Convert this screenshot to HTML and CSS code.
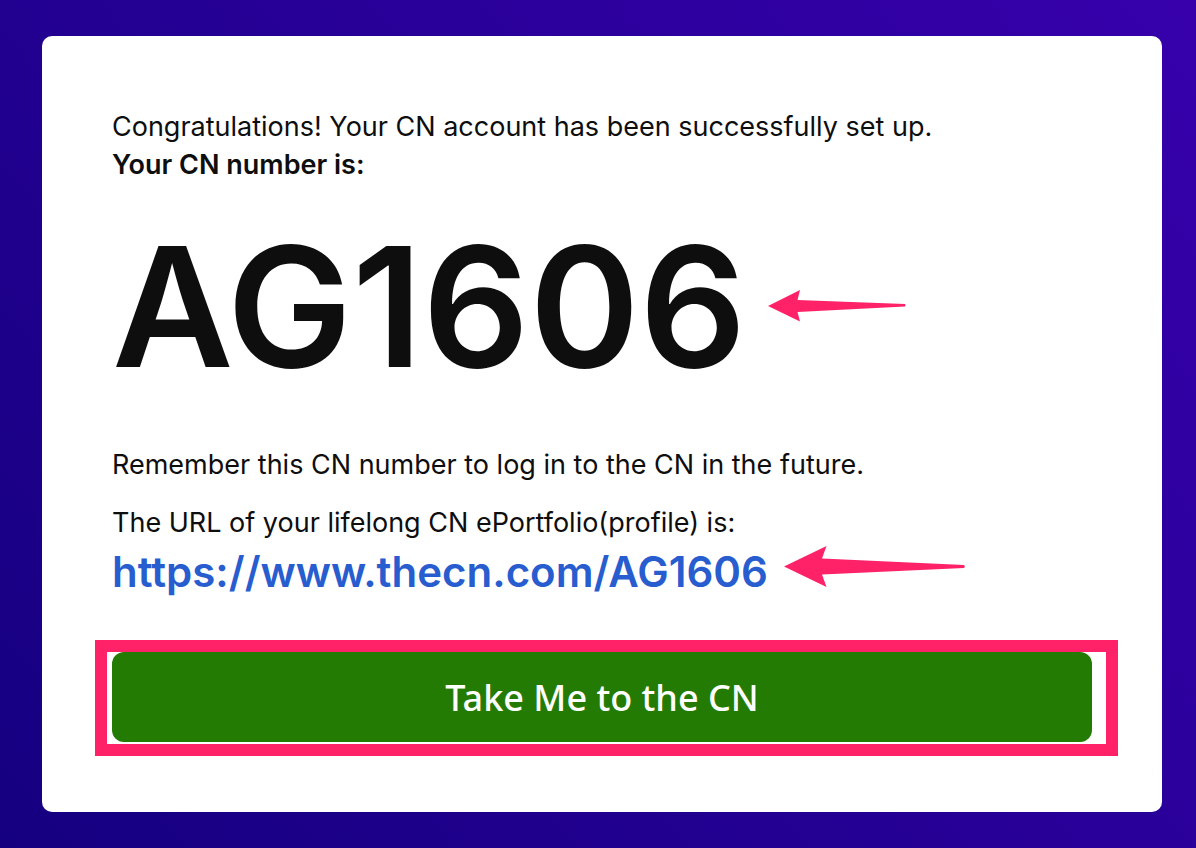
FILE: index.html
```html
<!DOCTYPE html>
<html lang="en">
<head>
    <meta charset="UTF-8">
    <meta name="viewport" content="width=device-width, initial-scale=1.0">
    <title>Your CN number</title>
    <link rel="stylesheet" href="styles.css">
</head>
<body>
    <main class="card">
        <p>Congratulations! Your CN account has been successfully set up.</p>
        <p><strong>Your CN number is:</strong></p>

        <div class="number-row">
            <h1>AG1606</h1>
            <svg class="arrow" width="138" height="32" viewBox="0 0 138 32" aria-hidden="true">
                <path d="M0 16 L32 0 L29.5 10 L137 14 Q138 15 137 16.5 L29.5 22 L32 31.5 Z"/>
            </svg>
        </div>

        <p>Remember this CN number to log in to the CN in the future.</p>

        <div class="profile">
            <p>The URL of your lifelong CN ePortfolio(profile) is:</p>
            <div class="link-row">
                <a href="#">https://www.thecn.com/AG1606</a>
                <svg class="arrow" width="181" height="52" viewBox="0 0 181 52" aria-hidden="true">
                    <path d="M0 20.5 L42.5 0 L38 12.5 L180 19 Q181.5 20.5 180 22 L38 28.5 L42.5 41 Z"/>
                </svg>
            </div>
        </div>

        <div class="action">
            <button type="button">Take Me to the CN</button>
            <span class="highlight"></span>
        </div>
    </main>
</body>
</html>
```

FILE: styles.css
```css
body {
    margin: 0;
    padding: 36px 34px 36px 42px;
    min-height: 100vh;
    box-sizing: border-box;
    background: linear-gradient(50deg, #150080, #3700ab);
    font-family: Inter, "Liberation Sans", sans-serif;
    font-size: 27px;
    line-height: 38px;
    color: #0e0e0e;
}

.card {
    background-color: #fff;
    border-radius: 10px;
    padding: 72px 70px 70px;
}

p {
    margin: 0;
}

strong {
    font-weight: 600;
}

.number-row {
    display: flex;
    align-items: center;
    gap: 22px;
    margin: 12px 0 30px;
}

h1 {
    margin: 0;
    font-size: 167px;
    font-weight: 600;
    line-height: 220px;
}

.arrow {
    flex-shrink: 0;
    fill: #ff2268;
}

.profile {
    margin-top: 20px;
}

.link-row {
    display: flex;
    align-items: center;
    gap: 16px;
}

.link-row a {
    color: #285dd0;
    font-size: 42px;
    font-weight: 600;
    line-height: 60px;
    text-decoration: none;
}

.action {
    position: relative;
    margin-top: 50px;
}

button {
    display: block;
    width: 100%;
    height: 90px;
    border: none;
    border-radius: 12px;
    background-color: #237b03;
    color: #fff;
    font-family: "Noto Sans", "Open Sans", sans-serif;
    font-size: 36px;
    font-weight: 500;
    cursor: pointer;
}

/* frame drawn around the button */
.highlight {
    position: absolute;
    top: -12px;
    right: -26px;
    bottom: -14px;
    left: -17px;
    border: 12px solid #ff2268;
    pointer-events: none;
}
```
